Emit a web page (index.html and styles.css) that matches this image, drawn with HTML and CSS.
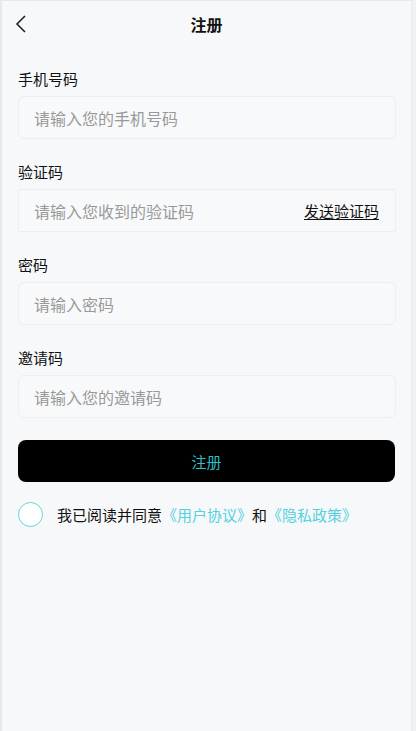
FILE: index.html
```html
<!DOCTYPE html>
<html lang="zh-CN">
<head>
<meta charset="utf-8">
<meta name="viewport" content="width=device-width, initial-scale=1">
<title>注册</title>
<link rel="stylesheet" href="styles.css">
</head>
<body>
<div class="frame">
  <header class="nav">
    <span class="back">
      <svg width="12" height="18" viewBox="0 0 12 18"><polyline points="10,1 2,9 10,17" fill="none" stroke="#222" stroke-width="1.6" stroke-linejoin="miter"/></svg>
    </span>
    <h1 class="title">注册</h1>
    <span class="nav-spacer"></span>
  </header>
  <main class="form">
    <div class="field">
      <div class="label">手机号码</div>
      <div class="input"><span class="ph">请输入您的手机号码</span></div>
    </div>
    <div class="field">
      <div class="label">验证码</div>
      <div class="input input-code"><span class="ph">请输入您收到的验证码</span><span class="send">发送验证码</span></div>
    </div>
    <div class="field">
      <div class="label">密码</div>
      <div class="input"><span class="ph">请输入密码</span></div>
    </div>
    <div class="field">
      <div class="label">邀请码</div>
      <div class="input"><span class="ph">请输入您的邀请码</span></div>
    </div>
    <button class="submit">注册</button>
    <div class="agree">
      <span class="check"></span>
      <span class="agree-text">我已阅读并同意<span class="link">《用户协议》</span>和<span class="link">《隐私政策》</span></span>
    </div>
  </main>
</div>
</body>
</html>
```
FILE: styles.css
```css
* { box-sizing: border-box; }
html, body { margin: 0; padding: 0; }
body {
  background: #f1f2f4;
  font-family: "Noto Sans CJK SC", "Noto Sans", sans-serif;
  color: #111;
}
.frame {
  width: 412px;
  min-height: 731px;
  background: #f7f8fa;
  border-left: 2px solid #e7e8ea;
  border-top: 1px solid #e7e8ea;
  border-right: 1px solid #e9eaec;
}
.nav {
  height: 46px;
  display: grid;
  grid-template-columns: 40px 1fr 40px;
  align-items: center;
}
.back {
  display: flex;
  align-items: center;
  padding-left: 13px;
}
.title {
  margin: 0;
  text-align: center;
  font-size: 16px;
  font-weight: 700;
  line-height: 22px;
  color: #111;
}
.form {
  padding: 21px 15px 0 16px;
}
.field {
  margin-bottom: 22px;
}
.label {
  font-size: 15px;
  line-height: 21px;
  color: #111;
  margin-bottom: 7px;
}
.input {
  height: 43px;
  border: 1px solid #eceef1;
  border-radius: 6px;
  background: #f8f9fb;
  display: flex;
  align-items: center;
  padding: 0 16px 0 15px;
}
.input-code {
  justify-content: space-between;
  border-radius: 2px;
}
.ph {
  font-size: 16px;
  color: #999;
}
.send {
  font-size: 15px;
  color: #111;
  text-decoration: underline;
  text-underline-offset: 2px;
}
.submit {
  display: flex;
  align-items: center;
  justify-content: center;
  width: calc(100% - 1px);
  height: 42px;
  margin-top: 1px;
  border: 0;
  border-radius: 8px;
  background: #000;
  color: #2bbfc4;
  font-family: inherit;
  font-size: 15px;
}
.agree {
  display: flex;
  align-items: center;
  gap: 14px;
  margin-top: 20px;
}
.check {
  width: 25px;
  height: 25px;
  border-radius: 50%;
  border: 1.5px solid #5fd6d9;
  background: #fff;
  flex: none;
}
.agree-text {
  font-size: 15px;
  color: #111;
  line-height: 21px;
}
.link {
  color: #55d0de;
}
```
